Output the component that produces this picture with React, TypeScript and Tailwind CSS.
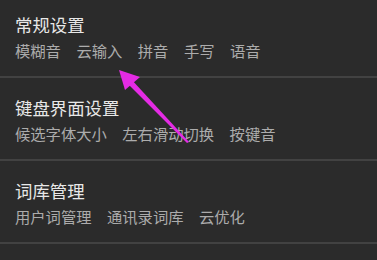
import React from "react";

const rows = [
  { title: "常规设置", items: ["模糊音", "云输入", "拼音", "手写", "语音"] },
  { title: "键盘界面设置", items: ["候选字体大小", "左右滑动切换", "按键音"] },
  { title: "词库管理", items: ["用户词管理", "通讯录词库", "云优化"] },
];

export default function App() {
  return (
    <div
      className="relative w-[377px] h-[260px] overflow-hidden bg-[#2b2b2b]"
      style={{ fontFamily: '"Noto Sans CJK SC", "Noto Sans", sans-serif' }}
    >
      <div className="flex flex-col">
        {rows.map((r, i) => (
          <div key={i} className="flex flex-col">
            <div className={`flex flex-col pl-[15px] pb-[17px] ${i === 0 ? "pt-[15px]" : "pt-[20px]"}`}>
              <div className="text-[17.4px] leading-[20px] text-[#e8e8e8]">{r.title}</div>
              <div className="mt-[6px] flex gap-[15.5px] text-[15.3px] leading-[18px] text-[#acacac]">
                {r.items.map((t) => (
                  <span key={t}>{t}</span>
                ))}
              </div>
            </div>
            <div className="h-[2px] bg-[#424242]" />
          </div>
        ))}
      </div>
      <svg
        className="absolute left-0 top-0"
        width="377"
        height="260"
        viewBox="0 0 377 260"
      >
        <path d="M189 142 L187 143 L127 83 L131 79 Z" fill="#e42be4" />
        <path d="M119 70 L140 77 L125 90 Z" fill="#e42be4" />
      </svg>
    </div>
  );
}
